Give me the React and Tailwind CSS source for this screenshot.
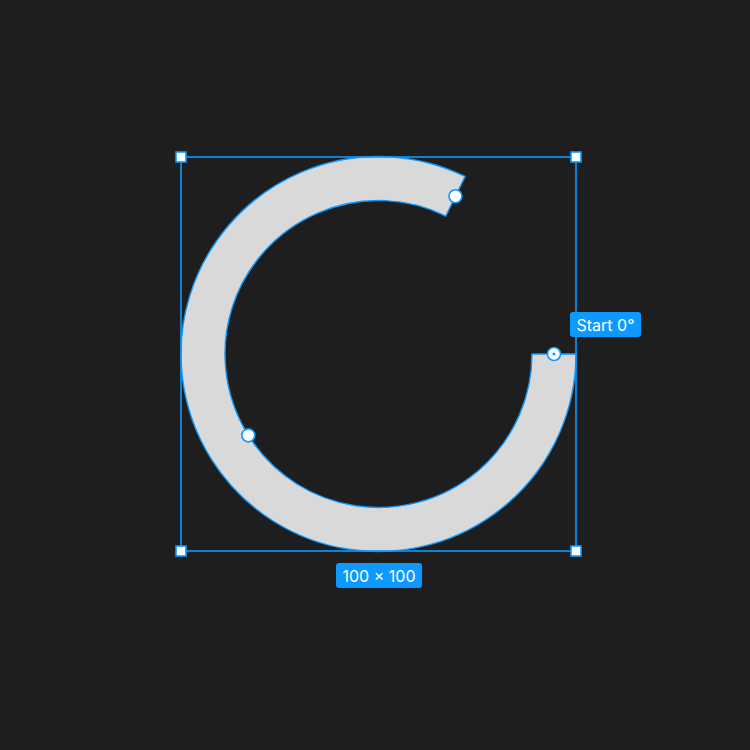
export default function App() {
  const cx = 378.5;
  const cy = 354;
  const R = 197.5;
  const r = 153.5;
  const end = (296 * Math.PI) / 180;
  const ox = cx + R * Math.cos(end);
  const oy = cy + R * Math.sin(end);
  const ix = cx + r * Math.cos(end);
  const iy = cy + r * Math.sin(end);
  const d = `M ${cx + R} ${cy} A ${R} ${R} 0 1 1 ${ox} ${oy} L ${ix} ${iy} A ${r} ${r} 0 1 0 ${cx + r} ${cy} Z`;
  const m = (R + r) / 2;
  const hx = cx + m * Math.cos(end);
  const hy = cy + m * Math.sin(end);
  const mid = (148 * Math.PI) / 180;
  const rx = cx + r * Math.cos(mid);
  const ry = cy + r * Math.sin(mid);
  const blue = "#0d99ff";
  const corners = [
    [181, 157],
    [576, 157],
    [181, 551],
    [576, 551],
  ];
  return (
    <div className="relative w-[750px] h-[750px] bg-[#1e1e1e] overflow-hidden" style={{ fontFamily: "Inter, 'Noto Sans', sans-serif" }}>
      <svg className="absolute inset-0" width="750" height="750" viewBox="0 0 750 750">
        <path d={d} fill="#d9d9d9" stroke={blue} strokeWidth="1.4" />
        <rect x="181" y="157" width="395" height="394" fill="none" stroke={blue} strokeWidth="1.6" />
        {corners.map(([x, y], i) => (
          <rect key={i} x={x - 5} y={y - 5} width="10" height="10" fill="#ffffff" stroke={blue} strokeWidth="1.6" />
        ))}
        <circle cx={hx} cy={hy} r="6.5" fill="#ffffff" stroke={blue} strokeWidth="1.6" />
        <circle cx={rx} cy={ry} r="6.5" fill="#ffffff" stroke={blue} strokeWidth="1.6" />
        <circle cx={cx + m} cy={cy} r="6.5" fill="#ffffff" stroke={blue} strokeWidth="1.6" />
        <circle cx={cx + m} cy={cy} r="1.5" fill={blue} />
      </svg>
      <div className="absolute left-[570px] top-[312px] h-[25px] w-[71px] rounded-[3px] bg-[#0d99ff] flex items-center justify-center text-white text-[16px] font-normal leading-none">
        Start 0°
      </div>
      <div className="absolute left-[336px] top-[563px] h-[25px] w-[86px] rounded-[3px] bg-[#0d99ff] flex items-center justify-center text-white text-[16px] font-normal leading-none">
        100 × 100
      </div>
    </div>
  );
}
